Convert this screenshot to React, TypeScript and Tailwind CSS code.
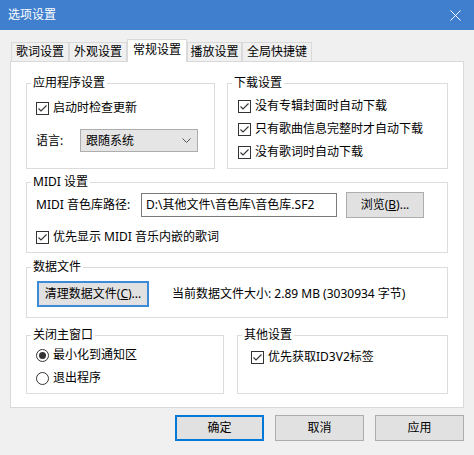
import React from 'react';

function CheckBox({ checked = true }: { checked?: boolean }) {
  return (
    <svg width="13" height="13" viewBox="0 0 13 13" className="shrink-0">
      <rect x="0.5" y="0.5" width="12" height="12" fill="#fff" stroke="#333" />
      {checked && <path d="M2.5 6.5 L5 9 L10.5 3.5" fill="none" stroke="#333" strokeWidth="1.1" />}
    </svg>
  );
}

function Radio({ checked = false }: { checked?: boolean }) {
  return (
    <svg width="13" height="13" viewBox="0 0 13 13" className="shrink-0">
      <circle cx="6.5" cy="6.5" r="6" fill="#fff" stroke="#333" />
      {checked && <circle cx="6.5" cy="6.5" r="3.5" fill="#333" />}
    </svg>
  );
}

function Check({ label }: { label: string }) {
  return (
    <div className="flex items-center gap-[4px] h-[16px]">
      <CheckBox />
      <span>{label}</span>
    </div>
  );
}

function Group({ title, className, children }: { title: string; className: string; children: React.ReactNode }) {
  return (
    <fieldset className={`border border-[#dcdcdc] px-0 pb-0 ${className}`}>
      <legend className="ml-[4px] px-[2px] leading-[16px]">{title}</legend>
      {children}
    </fieldset>
  );
}

const tabs = ['歌词设置', '外观设置', '常规设置', '播放设置', '全局快捷键'];
const tabWidths = ['w-[58px]', 'w-[58px]', 'w-[60px]', 'w-[55px]', 'w-[70px]'];

export default function App() {
  return (
    <div className="w-[474px] h-[455px] bg-[#f0f0f0] flex flex-col text-[12px] leading-[16px] text-black font-['Noto_Sans','Noto_Sans_CJK_SC',sans-serif]">
      {/* Title bar */}
      <div className="h-[30px] bg-[#3f7fcd] flex items-center justify-between pl-[8px] pr-[13px] text-white">
        <span>选项设置</span>
        <svg width="11" height="11" viewBox="0 0 11 11">
          <path d="M0.5 0.5 L10.5 10.5 M10.5 0.5 L0.5 10.5" stroke="#fff" strokeWidth="1" />
        </svg>
      </div>

      <div className="px-[10px] pt-[9px]">
        {/* Tabs */}
        <div className="flex items-end h-[22px] pl-[1px]">
          {tabs.map((t, i) =>
            i === 2 ? (
              <div
                key={t}
                className={`${tabWidths[i]} relative z-10 h-[23px] -mb-px bg-white border border-b-0 border-[#d9d9d9] flex items-center justify-center pb-[3px]`}
              >
                {t}
              </div>
            ) : (
              <div
                key={t}
                className={`${tabWidths[i]} h-[19px] bg-[#f0f0f0] border border-b-0 border-[#d9d9d9] flex items-center justify-center`}
              >
                {t}
              </div>
            )
          )}
        </div>

        {/* Tab page */}
        <div className="h-[347px] bg-white border border-[#d9d9d9] pl-[15px] pt-[13px]">
          <div className="flex gap-[12px]">
            <Group title="应用程序设置" className="w-[189px] h-[94px]">
              <div className="pl-[9px] pt-[9px]">
                <Check label="启动时检查更新" />
                <div className="flex items-center mt-[13px]">
                  <span className="w-[44px]">语言:</span>
                  <div className="w-[118px] h-[23px] bg-[#e5e5e5] border border-[#adadad] flex items-center justify-between pl-[5px] pr-[6px]">
                    <span>跟随系统</span>
                    <svg width="9" height="6" viewBox="0 0 9 6">
                      <path d="M0.5 0.5 L4.5 4.5 L8.5 0.5" fill="none" stroke="#555" strokeWidth="1" />
                    </svg>
                  </div>
                </div>
              </div>
            </Group>
            <Group title="下载设置" className="w-[221px] h-[94px]">
              <div className="pl-[10px] pt-[7px] flex flex-col gap-[7px]">
                <Check label="没有专辑封面时自动下载" />
                <Check label="只有歌曲信息完整时才自动下载" />
                <Check label="没有歌词时自动下载" />
              </div>
            </Group>
          </div>

          <Group title="MIDI 设置" className="w-[422px] h-[79px] mt-[5px]">
            <div className="pl-[9px] pt-[2px]">
              <div className="flex items-center">
                <span className="w-[105px]">MIDI 音色库路径:</span>
                <div className="w-[196px] h-[24px] border border-[#7a7a7a] flex items-center pl-[4px]">
                  D:\其他文件\音色库\音色库.SF2
                </div>
                <div className="ml-[9px] w-[78px] h-[26px] bg-[#e1e1e1] border border-[#adadad] flex items-center justify-center">
                  浏览(<span className="underline">B</span>)...
                </div>
              </div>
              <div className="mt-[11px]">
                <Check label="优先显示 MIDI 音乐内嵌的歌词" />
              </div>
            </div>
          </Group>

          <Group title="数据文件" className="w-[422px] h-[59px] mt-[6px]">
            <div className="pl-[10px] pt-[6px] flex items-center">
              <div className="w-[112px] h-[26px] bg-[#e1e1e1] border-2 border-[#3c8ad8] flex items-center justify-center">
                清理数据文件(<span className="underline">C</span>)...
              </div>
              <span className="ml-[23px]">当前数据文件大小: 2.89 MB (3030934 字节)</span>
            </div>
          </Group>

          <div className="flex gap-[13px] mt-[9px]">
            <Group title="关闭主窗口" className="w-[198px] h-[67px]">
              <div className="pl-[9px] pt-[4px] flex flex-col gap-[7px]">
                <div className="flex items-center gap-[4px] h-[16px]">
                  <Radio checked />
                  <span>最小化到通知区</span>
                </div>
                <div className="flex items-center gap-[4px] h-[16px]">
                  <Radio />
                  <span>退出程序</span>
                </div>
              </div>
            </Group>
            <Group title="其他设置" className="w-[211px] h-[67px]">
              <div className="pl-[13px] pt-[6px]">
                <Check label="优先获取ID3V2标签" />
              </div>
            </Group>
          </div>
        </div>
      </div>

      {/* Dialog buttons */}
      <div className="flex justify-end gap-[11px] pr-[10px] mt-[7px]">
        <div className="w-[89px] h-[26px] bg-[#e1e1e1] border-2 border-[#0078d7] flex items-center justify-center">确定</div>
        <div className="w-[89px] h-[26px] bg-[#e1e1e1] border border-[#adadad] flex items-center justify-center">取消</div>
        <div className="w-[89px] h-[26px] bg-[#e1e1e1] border border-[#adadad] flex items-center justify-center">应用</div>
      </div>
    </div>
  );
}
